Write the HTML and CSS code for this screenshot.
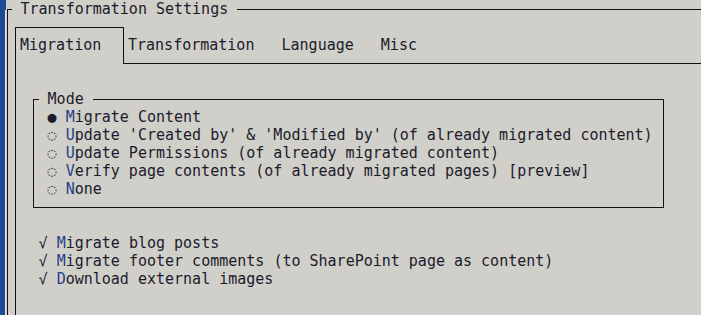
FILE: index.html
```html
<!DOCTYPE html>
<html lang="en">
<head>
<meta charset="utf-8">
<title>Transformation Settings</title>
<link rel="stylesheet" href="styles.css">
</head>
<body>
<div class="screen">
  <div class="strip"><div class="strip-edge"></div></div>
  <section class="win">
    <h1 class="win-title">Transformation Settings</h1>
    <div class="tabview">
      <div class="tabbar">
        <div class="tab active">Migration</div>
        <div class="tab-rest">
          <span class="tab">Transformation</span>
          <span class="tab">Language</span>
          <span class="tab">Misc</span>
        </div>
      </div>
      <div class="tabbody">
        <fieldset class="group">
          <div class="group-title">Mode</div>
          <div class="opt"><span class="mark">●</span><span class="hk">M</span>igrate Content</div>
          <div class="opt"><span class="mark dot">◌</span><span class="hk">U</span>pdate 'Created by' &amp; 'Modified by' (of already migrated content)</div>
          <div class="opt"><span class="mark dot">◌</span><span class="hk">U</span>pdate Permissions (of already migrated content)</div>
          <div class="opt"><span class="mark dot">◌</span><span class="hk">V</span>erify page contents (of already migrated pages) [preview]</div>
          <div class="opt"><span class="mark dot">◌</span><span class="hk">N</span>one</div>
        </fieldset>
        <div class="checks">
          <div class="opt"><span class="mark">√</span><span class="hk">M</span>igrate blog posts</div>
          <div class="opt"><span class="mark">√</span><span class="hk">M</span>igrate footer comments (to SharePoint page as content)</div>
          <div class="opt"><span class="mark">√</span><span class="hk">D</span>ownload external images</div>
        </div>
      </div>
    </div>
  </section>
</div>
</body>
</html>
```
FILE: styles.css
```css
* { box-sizing: border-box; }

html, body {
  margin: 0;
  padding: 0;
  background: #d1cfca;
}

body {
  font-family: "DejaVu Sans Mono", "Liberation Mono", monospace;
  font-size: 15px;
  line-height: 18px;
  color: #1b1b2b;
  overflow: hidden;
}

.screen {
  display: flex;
  width: 701px;
  height: 315px;
  overflow: hidden;
}

.strip {
  width: 6px;
  flex: none;
  background: #1e4a94;
  display: flex;
  justify-content: flex-end;
  padding-top: 10px;
}

.strip-edge {
  width: 1px;
  background: #dfe3ec;
}

.win {
  flex: 1;
  position: relative;
  margin-left: 1px;
  margin-top: 9px;
  border-left: 1px solid #121212;
  border-top: 1px solid #121212;
  display: flex;
  flex-direction: column;
}

.win-title {
  position: absolute;
  top: -10px;
  left: 3.5px;
  margin: 0;
  padding: 0 9px;
  font-size: 15px;
  font-weight: normal;
  line-height: 18px;
  background: #d1cfca;
}

.tabview {
  flex: 1;
  margin-left: 7px;
  margin-top: 17px;
  display: flex;
  flex-direction: column;
}

.tabbar {
  display: flex;
}

.tab.active {
  width: 109px;
  flex: none;
  border: 1px solid #121212;
  border-bottom: none;
  padding: 8px 0 10px 4px;
}

.tab-rest {
  flex: 1;
  display: flex;
  gap: 3ch;
  padding: 9px 0 0 4px;
  border-bottom: 1px solid #121212;
}

.tabbody {
  flex: 1;
  border-left: 1px solid #121212;
  padding: 35px 0 0 17px;
}

.group {
  position: relative;
  margin: 0;
  width: 631px;
  height: 109px;
  border: 1px solid #121212;
  padding: 8px 0 9px 13.6px;
}

.group-title {
  position: absolute;
  top: -10px;
  left: 4.6px;
  padding: 0 9px;
  background: #d1cfca;
}

.opt {
  white-space: pre;
  height: 18px;
}

.mark {
  display: inline-block;
  width: 18.06px;
}

.mark.dot {
  color: #3a3a48;
}

.hk {
  color: #1f4288;
}

.checks {
  margin-top: 26px;
  margin-left: 5.6px;
}
```
